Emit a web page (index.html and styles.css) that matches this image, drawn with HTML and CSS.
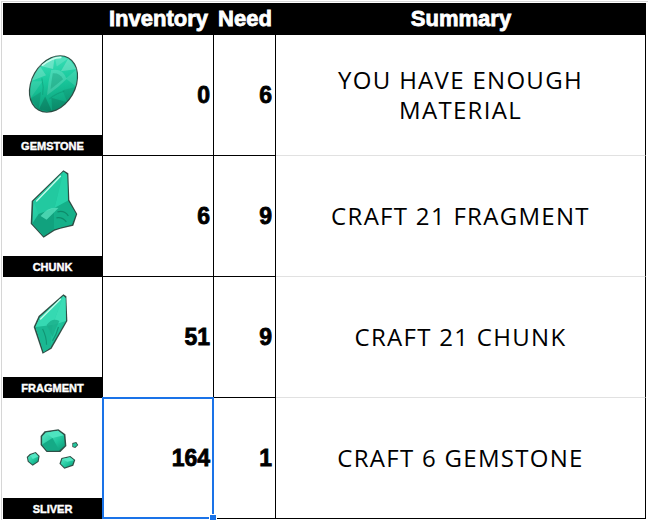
FILE: index.html
```html
<!DOCTYPE html>
<html>
<head>
<meta charset="utf-8">
<link rel="stylesheet" href="styles.css">
</head>
<body>
<div class="sheet">
  <div class="grid">
    <div class="hd hd-a"></div>
    <div class="hd">Inventory</div>
    <div class="hd">Need</div>
    <div class="hd">Summary</div>

    <div class="item">
      <div class="pic">
        <svg width="100" height="100" viewBox="0 0 100 100">
          <defs>
            <linearGradient id="g1" x1="0.2" y1="0" x2="0.8" y2="1">
              <stop offset="0" stop-color="#3fe3bb"/>
              <stop offset="0.45" stop-color="#19c99d"/>
              <stop offset="1" stop-color="#0a9672"/>
            </linearGradient>
          </defs>
          <g transform="rotate(30 51 49)">
            <ellipse cx="51" cy="49" rx="22.5" ry="31" fill="#2f4f46"/>
            <ellipse cx="51" cy="49" rx="21.3" ry="29.8" fill="url(#g1)"/>
            <polygon points="51,19.2 64,24 51,34" fill="#ffffff" opacity="0.22"/>
            <polygon points="64,24 72.3,40 59,38" fill="#ffffff" opacity="0.12"/>
            <polygon points="72.3,40 72.3,58 62,50" fill="#000000" opacity="0.08"/>
            <polygon points="72.3,58 64,74 56,62" fill="#000000" opacity="0.12"/>
            <polygon points="64,74 51,78.8 50,64" fill="#000000" opacity="0.16"/>
            <polygon points="51,78.8 38,74 44,62" fill="#000000" opacity="0.1"/>
            <polygon points="38,74 29.7,58 40,52" fill="#ffffff" opacity="0.1"/>
            <polygon points="29.7,58 29.7,40 40,45" fill="#ffffff" opacity="0.2"/>
            <polygon points="29.7,40 38,24 43,36" fill="#ffffff" opacity="0.28"/>
            <polygon points="38,24 51,19.2 45,32" fill="#ffffff" opacity="0.16"/>
            <path d="M42 38 Q51 30 60 38 Q57 50 51 62 Q45 50 42 38 Z" fill="#ffffff" opacity="0.16"/>
            <path d="M45 40 Q51 36 57 40 Q54 48 51 55 Q48 48 45 40 Z" fill="#0b8f6d" opacity="0.35"/>
            <path d="M38 50 Q44 56 47 64 M64 50 Q58 56 55 64" stroke="#0b8f6d" stroke-width="1" fill="none" opacity="0.5"/>
            <path d="M32 38 Q36 27 44 22" stroke="#d4fff1" stroke-width="1.6" fill="none" stroke-linecap="round" opacity="0.9"/>
          </g>
        </svg>
      </div>
      <div class="label">GEMSTONE</div>
    </div>
    <div class="num">0</div>
    <div class="num">6</div>
    <div class="sum">YOU HAVE ENOUGH MATERIAL</div>

    <div class="item">
      <div class="pic">
        <svg width="100" height="100" viewBox="0 0 100 100">
          <defs>
            <linearGradient id="g2" x1="0" y1="0" x2="1" y2="1">
              <stop offset="0" stop-color="#3fe0b8"/>
              <stop offset="0.6" stop-color="#17c096"/>
              <stop offset="1" stop-color="#0a936f"/>
            </linearGradient>
          </defs>
          <polygon points="61,14 66,17 67,44 75,58 71,70 58,73 52,75 41,82 28,68 29,45" fill="#2f4f46"/>
          <polygon points="61,15.5 64.7,18.3 65.6,44.8 73.6,58 69.6,68.8 57.6,71.7 51.6,73.6 41,80.3 29.6,67.6 30.6,45.4" fill="url(#g2)"/>
          <polygon points="61,15.5 64.7,18.3 65.6,44.8 52,52" fill="#27d2a8"/>
          <polygon points="30.6,45.4 61,15.5 52,52 36,58" fill="#22c9a0"/>
          <polygon points="36,58 52,52 51.6,73.6 41,80.3 29.6,67.6" fill="#11a27e"/>
          <polygon points="52,52 65.6,44.8 73.6,58 69.6,68.8 57.6,71.7 51.6,73.6" fill="#15b089"/>
          <path d="M38 60 Q46 50 56 52 Q50 58 44 64 Z" fill="#5fe8c5" opacity="0.7"/>
          <path d="M55 56 Q62 54 66 60" stroke="#0b7a5d" stroke-width="1.2" fill="none" opacity="0.7"/>
          <path d="M54 62 Q60 61 64 66" stroke="#0b7a5d" stroke-width="1.2" fill="none" opacity="0.7"/>
          <path d="M34 45 L58 20" stroke="#c4fbe9" stroke-width="1.4" stroke-linecap="round"/>
        </svg>
      </div>
      <div class="label">CHUNK</div>
    </div>
    <div class="num">6</div>
    <div class="num">9</div>
    <div class="sum">CRAFT 21 FRAGMENT</div>

    <div class="item">
      <div class="pic">
        <svg width="100" height="100" viewBox="0 0 100 100">
          <defs>
            <linearGradient id="g3" x1="0" y1="0" x2="1" y2="1">
              <stop offset="0" stop-color="#5fe9c6"/>
              <stop offset="0.6" stop-color="#22c9a0"/>
              <stop offset="1" stop-color="#0f9c7a"/>
            </linearGradient>
          </defs>
          <polygon points="61,17 64,19 65,44 49,72 40,77 31,50 36,39" fill="#2f4f46"/>
          <polygon points="61,18.6 63.1,20.6 63.6,44 48,70.6 41,75.2 32.8,50 37.4,40" fill="url(#g3)"/>
          <polygon points="61,18.6 63.1,20.6 63.6,44 50,48" fill="#3bdcb5"/>
          <polygon points="32.8,50 37.4,40 61,18.6 50,48" fill="#35d9b2"/>
          <polygon points="32.8,50 50,48 48,70.6 41,75.2" fill="#1ab892"/>
          <path d="M44 48 Q50 40 57 44 Q53 52 50 60 Q47 53 44 48 Z" fill="#1aae89" opacity="0.8"/>
          <path d="M40 52 Q44 60 44 68" stroke="#129574" stroke-width="1.1" fill="none"/>
          <path d="M56 50 Q54 58 50 64" stroke="#129574" stroke-width="1.1" fill="none"/>
          <path d="M38 42 L58 22" stroke="#c4fbe9" stroke-width="1.3" stroke-linecap="round"/>
        </svg>
      </div>
      <div class="label">FRAGMENT</div>
    </div>
    <div class="num">51</div>
    <div class="num">9</div>
    <div class="sum">CRAFT 21 CHUNK</div>

    <div class="item">
      <div class="pic">
        <svg width="100" height="100" viewBox="0 0 100 100">
          <defs>
            <linearGradient id="g4" x1="0" y1="0" x2="1" y2="1">
              <stop offset="0" stop-color="#5fe9c6"/>
              <stop offset="0.6" stop-color="#1fc59c"/>
              <stop offset="1" stop-color="#0c9674"/>
            </linearGradient>
          </defs>
          <polygon points="42,33 56,31 63,36 64,48 58,54 44,54 38,47 38,38" fill="#2f4f46"/>
          <polygon points="43,34.5 55.5,32.5 61.5,37 62.5,47.5 57,52.5 44.5,52.5 39.5,46.5 39.5,38.5" fill="url(#g4)"/>
          <polygon points="43,34.5 55.5,32.5 61.5,37 50,40" fill="#4ee4bf"/>
          <polygon points="39.5,46.5 50,40 57,52.5 44.5,52.5" fill="#15aa86"/>
          <polygon points="70,45 74,44 76,47 73,50 70,49" fill="#2f4f46"/>
          <polygon points="70.8,45.8 73.6,45 75,47 72.6,49 70.8,48.4" fill="#22c79e"/>
          <polygon points="27,56 33,54 37,58 36,64 30,68 25,64 24,59" fill="#2f4f46"/>
          <polygon points="27.5,57.2 32.6,55.4 35.8,58.6 35,63.4 30,66.6 26,63.4 25.2,59.6" fill="url(#g4)"/>
          <polygon points="27.5,57.2 32.6,55.4 35.8,58.6 30,61" fill="#52e6c2"/>
          <polygon points="59,60 68,58 73,62 71,68 62,71 57,66" fill="#2f4f46"/>
          <polygon points="59.8,61.2 67.6,59.4 71.6,62.4 70,67 62.2,69.6 58.4,66" fill="url(#g4)"/>
          <polygon points="59.8,61.2 67.6,59.4 71.6,62.4 65,64" fill="#52e6c2"/>
        </svg>
      </div>
      <div class="label">SLIVER</div>
    </div>
    <div class="num selected">164<span class="handle"></span></div>
    <div class="num">1</div>
    <div class="sum last">CRAFT 6 GEMSTONE</div>
  </div>
</div>
</body>
</html>
```
FILE: styles.css
```css
html, body {
  margin: 0;
  padding: 0;
  background: #ffffff;
}
.sheet {
  margin: 1px 0 0 1px;
  border-top: 1px solid #d6d6d6;
  border-left: 1px solid #d6d6d6;
  padding: 1px 0 0 1px;
  width: 647px;
  height: 519px;
  box-sizing: border-box;
}
.grid {
  display: grid;
  grid-template-columns: 100px 111px 62px 370px;
  grid-template-rows: 32px repeat(4, 121px);
}
.hd {
  background: #000;
  color: #fff;
  font-family: "Liberation Sans", sans-serif;
  font-weight: 700;
  font-size: 22px;
  -webkit-text-stroke: 0.8px #fff;
  display: flex;
  align-items: center;
  justify-content: center;
  padding-bottom: 1px;
  box-sizing: border-box;
}
.hd-a {
  border-right: 1px solid #000;
}
.item {
  display: flex;
  flex-direction: column;
  border-right: 1px solid #000;
}
.pic {
  height: 100px;
  display: flex;
  align-items: center;
  justify-content: center;
}
.label {
  height: 21px;
  background: #000;
  color: #fff;
  font-family: "Liberation Sans", sans-serif;
  font-weight: 700;
  font-size: 11px;
  -webkit-text-stroke: 0.4px #fff;
  display: flex;
  align-items: center;
  justify-content: center;
}
.num {
  position: relative;
  border-right: 1px solid #000;
  border-bottom: 1px solid #000;
  display: flex;
  align-items: center;
  justify-content: flex-end;
  padding-right: 3px;
  font-family: "Liberation Sans", sans-serif;
  font-weight: 700;
  font-size: 23px;
  -webkit-text-stroke: 0.8px #000;
  color: #000;
}
.sum {
  border-right: 1px solid #000;
  border-bottom: 1px solid #e1e1e1;
  display: flex;
  align-items: center;
  justify-content: center;
  text-align: center;
  padding: 0 50px;
  font-family: "Open Sans", sans-serif;
  font-weight: 400;
  font-size: 24px;
  line-height: 30px;
  letter-spacing: 1.3px;
  color: #000;
}
.sum.last {
  border-bottom: 1px solid #000;
}
.selected::after {
  content: "";
  position: absolute;
  left: -1px;
  top: -1px;
  right: -1px;
  bottom: -1px;
  border: 2px solid #1a73e8;
}
.handle {
  position: absolute;
  right: -4px;
  bottom: -4px;
  width: 6px;
  height: 6px;
  background: #1a73e8;
  border: 1px solid #fff;
  z-index: 2;
}
```
